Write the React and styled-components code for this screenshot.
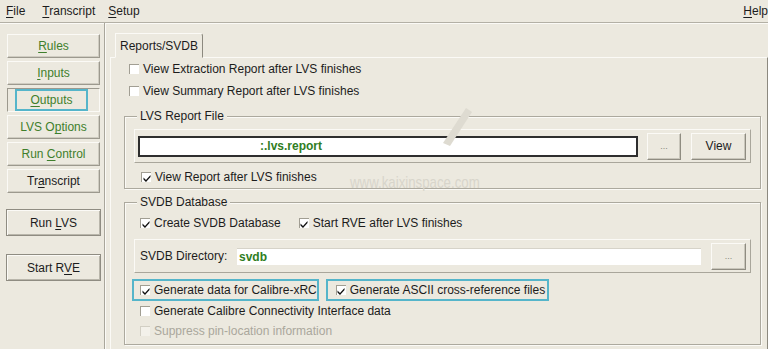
import React from "react";
import styled, { createGlobalStyle } from "styled-components";

const GlobalStyle = createGlobalStyle`
  html, body {
    margin: 0;
    padding: 0;
    background: #ece9df;
  }
  body {
    font-family: "Liberation Sans", Arial, sans-serif;
    font-size: 12px;
    color: #1c1c1c;
    overflow: hidden;
  }
  u {
    text-decoration: underline;
    text-underline-offset: 2px;
  }
`;

const Window = styled.div`
  position: relative;
  width: 768px;
  height: 349px;
  display: flex;
  flex-direction: column;
  background: #ece9df;
  overflow: hidden;
`;

const MenuBar = styled.div`
  height: 22px;
  display: flex;
  align-items: center;
  padding-left: 6px;
  border-bottom: 1px solid #b3b0a5;
  box-shadow: 0 1px 0 #fbfaf6;
`;

const MenuItem = styled.span`
  margin-right: ${p => p.gap || 0}px;
  ${p => p.right && "margin-left: auto; margin-right: 0;"}
`;

const Body = styled.div`
  flex: 1;
  display: flex;
`;

const Sidebar = styled.div`
  width: 99px;
  padding: 11px 0 0 7px;
  display: flex;
  flex-direction: column;
  gap: 3px;
  border-right: 1px solid #a9a69b;
  box-shadow: 1px 0 0 #fbfaf6;
`;

const NavButton = styled.div`
  box-sizing: border-box;
  width: 93px;
  height: 24px;
  display: flex;
  align-items: center;
  justify-content: ${p => (p.active ? "flex-start" : "center")};
  padding-left: ${p => (p.active ? 7 : 0)}px;
  color: ${p => (p.green ? "#3f7f2c" : "#1c1c1c")};
  border: 1px solid;
  border-color: ${p =>
    p.active ? "#9c998e #fbfaf6 #fbfaf6 #9c998e" : "#fbfaf6 #9c998e #9c998e #fbfaf6"};
  box-shadow: ${p => (p.active ? "none" : "inset -1px -1px 0 #cfccc1")};
`;

const Focus = styled.div`
  box-sizing: border-box;
  width: 73px;
  height: 22px;
  display: flex;
  align-items: center;
  justify-content: center;
  border: 2px solid #55b5ca;
`;

const ActionButton = styled.div`
  box-sizing: border-box;
  width: 95px;
  height: 27px;
  margin-left: -1px;
  margin-top: ${p => p.top}px;
  display: flex;
  align-items: center;
  justify-content: center;
  border: 1px solid #8f8c82;
  box-shadow: inset 1px 1px 0 #fbfaf6, inset -1px -1px 0 #b9b6ab;
`;

const Content = styled.div`
  flex: 1;
  padding: 10px 0 0 5px;
  display: flex;
  flex-direction: column;
`;

const Tab = styled.div`
  box-sizing: border-box;
  margin-left: 5px;
  width: 88px;
  height: 25px;
  display: flex;
  align-items: center;
  justify-content: center;
  border: 1px solid;
  border-color: #fbfaf6 #8c897f transparent #fbfaf6;
  border-top-right-radius: 3px;
  position: relative;
  z-index: 1;
  margin-bottom: -1px;
  background: #ece9df;
`;

const Panel = styled.div`
  flex: 1;
  width: 637px;
  padding: 0 6px 0 13px;
  border-top: 1px solid #fbfaf6;
  border-left: 1px solid #fbfaf6;
  border-right: 1px solid #8c897f;
  box-shadow: 2px 0 0 #cfccc1;
`;

const Row = styled.div`
  height: ${p => p.h || 22}px;
  display: flex;
  align-items: center;
  gap: ${p => p.gap || 0}px;
  margin-left: ${p => (p.indent != null ? p.indent : 5)}px;
  margin-top: ${p => p.top || 0}px;
`;

const Check = styled.label`
  display: flex;
  align-items: center;
  gap: 4px;
  color: ${p => (p.disabled ? "#aaa79c" : "#1c1c1c")};
  white-space: nowrap;
`;

const Box = styled.span`
  box-sizing: border-box;
  width: 10px;
  height: 10px;
  display: inline-flex;
  align-items: center;
  justify-content: center;
  background: ${p => (p.disabled ? "#f3f1ea" : "#ffffff")};
  border-top: 1px solid ${p => (p.disabled ? "#d2cfc4" : "#a19e93")};
  border-left: 1px solid ${p => (p.disabled ? "#d2cfc4" : "#a19e93")};
`;

const Group = styled.fieldset`
  margin: ${p => p.top}px 0 0 0;
  padding: 0 9px ${p => p.bottom || 0}px 9px;
  border: 1px solid #aca99e;
  box-shadow: inset 1px 1px 0 #fbfaf6, 1px 1px 0 #fbfaf6;
`;

const Legend = styled.legend`
  margin-left: 3px;
  padding: 0 3px;
  line-height: 14px;
  background: #ece9df;
`;

const Inset = styled.div`
  box-sizing: border-box;
  height: 34px;
  margin-top: ${p => p.top}px;
  display: flex;
  align-items: center;
  padding: 0 4px 0 ${p => p.left || 3}px;
  border: 1px solid;
  border-color: #fbfaf6 #a9a69b #a9a69b #fbfaf6;
`;

const Field = styled.div`
  box-sizing: border-box;
  flex: 1;
  height: ${p => (p.dark ? 21 : 17)}px;
  display: flex;
  align-items: center;
  padding-left: ${p => p.pad || 2}px;
  background: #fff;
  border: ${p => (p.dark ? "2px solid #2e2e2e" : "none")};
  border-top: ${p => (p.dark ? "2px solid #2e2e2e" : "1px solid #d6d3c9")};
  color: #2f7d22;
  font-weight: bold;
`;

const Button = styled.div`
  box-sizing: border-box;
  width: ${p => p.w}px;
  height: 27px;
  margin-left: ${p => p.gap}px;
  display: flex;
  align-items: center;
  justify-content: center;
  color: ${p => (p.faint ? "#8a877d" : "#1c1c1c")};
  font-size: ${p => (p.faint ? 9 : 12)}px;
  border: 1px solid;
  border-color: #fbfaf6 #8f8c81 #8f8c81 #fbfaf6;
  box-shadow: inset -1px -1px 0 #c9c6bb;
`;

const Label = styled.span`
  width: 97px;
`;

const Highlight = styled.div`
  box-sizing: border-box;
  height: 22px;
  display: flex;
  align-items: center;
  padding: 0 ${p => p.right || 0}px 0 ${p => p.left}px;
  border: 2px solid #55b5ca;
`;

const Watermark = styled.div`
  position: absolute;
  left: 350px;
  top: 173px;
  font-family: "Liberation Sans", Arial, sans-serif;
  font-size: 17px;
  color: #d8d5cb;
  transform: scaleX(0.78);
  transform-origin: left center;
  pointer-events: none;
`;

const Streak = styled.svg`
  position: absolute;
  left: 432px;
  top: 104px;
  pointer-events: none;
`;

const CheckBox = ({ checked, disabled, children }) => (
  <Check disabled={disabled}>
    <Box disabled={disabled}>
      {checked && (
        <svg width="8" height="8" viewBox="0 0 8 8">
          <path d="M0.5 3.5 L3 6 L7.5 1 L7.5 3 L3 8 L0.5 5.5 Z" fill="#111" />
        </svg>
      )}
    </Box>
    {children}
  </Check>
);

export default function App() {
  return (
    <>
      <GlobalStyle />
      <Window>
        <MenuBar>
          <MenuItem gap={17}><u>F</u>ile</MenuItem>
          <MenuItem gap={13}><u>T</u>ranscript</MenuItem>
          <MenuItem><u>S</u>etup</MenuItem>
          <MenuItem right><u>H</u>elp</MenuItem>
        </MenuBar>
        <Body>
          <Sidebar>
            <NavButton green><span><u>R</u>ules</span></NavButton>
            <NavButton green><span><u>I</u>nputs</span></NavButton>
            <NavButton green active>
              <Focus><span><u>O</u>utputs</span></Focus>
            </NavButton>
            <NavButton green><span>LVS O<u>p</u>tions</span></NavButton>
            <NavButton green><span>Run <u>C</u>ontrol</span></NavButton>
            <NavButton><span>Tr<u>a</u>nscript</span></NavButton>
            <ActionButton top={13}><span>Run <u>L</u>VS</span></ActionButton>
            <ActionButton top={15}><span>Start R<u>V</u>E</span></ActionButton>
          </Sidebar>
          <Content>
            <Tab>Reports/SVDB</Tab>
            <Panel>
              <Row>
                <CheckBox>View Extraction Report after LVS finishes</CheckBox>
              </Row>
              <Row>
                <CheckBox>View Summary Report after LVS finishes</CheckBox>
              </Row>
              <Group top={7}>
                <Legend>LVS Report File</Legend>
                <Inset top={6}>
                  <Field dark pad={120}>:.lvs.report</Field>
                  <Button faint w={34} gap={9}>...</Button>
                  <Button w={55} gap={10}>View</Button>
                </Inset>
                <Row top={3} indent={7}>
                  <CheckBox checked>View Report after LVS finishes</CheckBox>
                </Row>
              </Group>
              <Group top={6} bottom={3}>
                <Legend>SVDB Database</Legend>
                <Row top={3} indent={6} gap={18}>
                  <CheckBox checked>Create SVDB Database</CheckBox>
                  <CheckBox checked>Start RVE after LVS finishes</CheckBox>
                </Row>
                <Inset top={5} left={5}>
                  <Label>SVDB Directory:</Label>
                  <Field>svdb</Field>
                  <Button faint w={35} gap={10}>...</Button>
                </Inset>
                <Row top={6} indent={-2} gap={7}>
                  <Highlight left={6}>
                    <CheckBox checked>Generate data for Calibre-xRC</CheckBox>
                  </Highlight>
                  <Highlight left={8} right={2}>
                    <CheckBox checked>Generate ASCII cross-reference files</CheckBox>
                  </Highlight>
                </Row>
                <Row h={20} indent={6}>
                  <CheckBox>Generate Calibre Connectivity Interface data</CheckBox>
                </Row>
                <Row h={20} indent={6}>
                  <CheckBox disabled>Suppress pin-location information</CheckBox>
                </Row>
              </Group>
            </Panel>
          </Content>
        </Body>
        <Watermark>www.kaixinspace.com</Watermark>
        <Streak width="44" height="50" viewBox="0 0 44 50">
          <path d="M34 4 L40 8 L18 42 L11 39 Z" fill="#dedbd1" />
        </Streak>
      </Window>
    </>
  );
}
